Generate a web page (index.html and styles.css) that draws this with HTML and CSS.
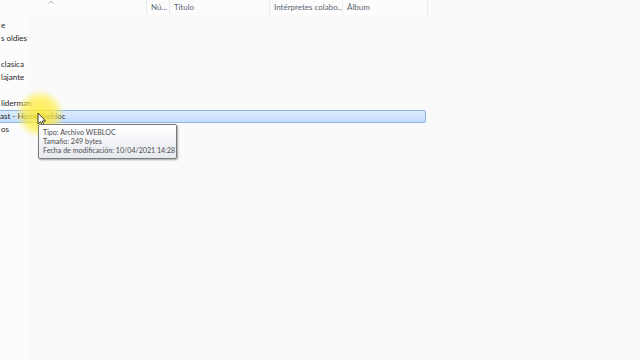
FILE: index.html
```html
<!DOCTYPE html>
<html lang="es">
<head>
  <meta charset="UTF-8">
  <title>Música</title>
  <link rel="stylesheet" href="styles.css">
</head>
<body>
  <div class="explorer">
    <div class="list">
      <div class="header">
        <div class="col col-name">
          <svg class="sort" width="6" height="4" viewBox="0 0 6 4"><path d="M0.5 3.5 L3 1 L5.5 3.5" fill="none" stroke="#a6abb2" stroke-width="0.9"/></svg>
        </div>
        <div class="col col-num">Nú...</div>
        <div class="col col-title">Título</div>
        <div class="col col-artist">Intérpretes colabo...</div>
        <div class="col col-album">Álbum</div>
      </div>
      <div class="rows">
        <div class="row"><span class="name">e</span></div>
        <div class="row"><span class="name">s oldies</span></div>
        <div class="row"></div>
        <div class="row"><span class="name">clasica</span></div>
        <div class="row"><span class="name">lajante</span></div>
        <div class="row"></div>
        <div class="row"><span class="name">liderman</span></div>
        <div class="row selected"><span class="name">ast - Home.webloc</span></div>
        <div class="row"><span class="name">os</span></div>
      </div>
    </div>

    <!-- resaltado del puntero -->
    <div class="cursor-glow"></div>
    <svg class="cursor" width="10" height="15" viewBox="0 0 10 15">
      <path d="M1 1 L1 12 L3.6 9.6 L5.4 13.6 L7 12.9 L5.3 9 L8.6 9 Z" fill="#fff" stroke="#222" stroke-width="0.9" stroke-linejoin="round"/>
    </svg>

    <div class="tooltip">
      <div>Tipo: Archivo WEBLOC</div>
      <div>Tamaño: 249 bytes</div>
      <div>Fecha de modificación: 10/04/2021 14:28</div>
    </div>
  </div>
</body>
</html>
```

FILE: styles.css
```css
html, body {
  margin: 0;
  padding: 0;
  background: #fafafa;
}
body {
  font-family: 'Lato', 'Open Sans', sans-serif;
  font-size: 8px;
  color: #1e1e1e;
  width: 640px;
  height: 360px;
  overflow: hidden;
}
.explorer {
  position: relative;
  width: 640px;
  height: 360px;
  background: linear-gradient(to right, #fcfcfc 0, #fcfcfc 27px, #fafafa 27px);
}
.list {
  width: 428px;
}
.header {
  display: flex;
  height: 19px;
  color: #5b6473;
}
.col {
  box-sizing: border-box;
  padding-left: 4px;
  height: 15px;
  line-height: 15px;
  background: #fcfcfc;
  border-right: 1px solid #ececec;
  white-space: nowrap;
  overflow: hidden;
}
.col-name {
  width: 147px;
  position: relative;
}
.col-num { width: 23px; }
.col-title { width: 100px; }
.col-artist { width: 73px; }
.col-album { width: 85px; }
.sort {
  position: absolute;
  left: 48px;
  top: 0;
}
.rows {
  display: flex;
  flex-direction: column;
}
.row {
  height: 13px;
  line-height: 11px;
  box-sizing: border-box;
  white-space: nowrap;
  border: 1px solid transparent;
}
.row.selected {
  width: 426px;
  background: linear-gradient(to bottom, #dcebfc, #c4ddfa);
  border: 1px solid #8fb4e0;
  border-left: none;
  border-radius: 0 2px 2px 0;
}
.cursor-glow {
  position: absolute;
  left: 16px;
  top: 90px;
  width: 48px;
  height: 48px;
  border-radius: 50%;
  background: radial-gradient(circle, rgba(255, 234, 50, 0.9) 0, rgba(255, 238, 70, 0.7) 45%, rgba(255, 245, 120, 0) 72%);
  pointer-events: none;
}
.cursor {
  position: absolute;
  left: 37px;
  top: 112px;
}
.tooltip {
  position: absolute;
  left: 38px;
  top: 124px;
  width: 139px;
  box-sizing: border-box;
  padding: 3px 3px 3px 4px;
  background: linear-gradient(to bottom, #ffffff, #e6e9ef);
  border: 1px solid #7a7a7a;
  border-radius: 2px;
  box-shadow: 1px 1px 2px rgba(0, 0, 0, 0.35);
  color: #4f4f4f;
  font-size: 7.1px;
  line-height: 9px;
  white-space: nowrap;
}
```
